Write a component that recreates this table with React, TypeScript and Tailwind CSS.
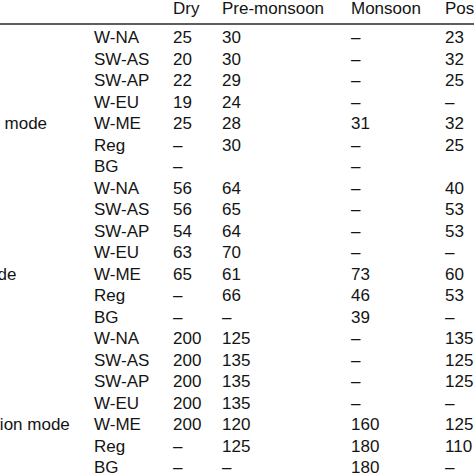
import React from 'react'

type Row = [string, string, string, string, string]

const groups: { label: string; shift: string; rows: Row[] }[] = [
  {
    label: 'Nucleation mode',
    shift: 'ml-[-2.5px]',
    rows: [
      ['W-NA', '25', '30', '–', '23'],
      ['SW-AS', '20', '30', '–', '32'],
      ['SW-AP', '22', '29', '–', '25'],
      ['W-EU', '19', '24', '–', '–'],
      ['W-ME', '25', '28', '31', '32'],
      ['Reg', '–', '30', '–', '25'],
      ['BG', '–', '', '–', ''],
    ],
  },
  {
    label: 'Aitken mode',
    shift: 'ml-0',
    rows: [
      ['W-NA', '56', '64', '–', '40'],
      ['SW-AS', '56', '65', '–', '53'],
      ['SW-AP', '54', '64', '–', '53'],
      ['W-EU', '63', '70', '–', '–'],
      ['W-ME', '65', '61', '73', '60'],
      ['Reg', '–', '66', '46', '53'],
      ['BG', '–', '–', '39', '–'],
    ],
  },
  {
    label: 'Accumulation mode',
    shift: 'ml-[-1.5px]',
    rows: [
      ['W-NA', '200', '125', '–', '135'],
      ['SW-AS', '200', '135', '–', '125'],
      ['SW-AP', '200', '135', '–', '125'],
      ['W-EU', '200', '135', '–', '–'],
      ['W-ME', '200', '120', '160', '125'],
      ['Reg', '–', '125', '180', '110'],
      ['BG', '–', '–', '180', '–'],
    ],
  },
]

const cols = 'grid grid-cols-[172px_79px_49px_129px_94px_200px] h-[21.5px] leading-[21.5px] whitespace-nowrap'

export default function App() {
  return (
    <div
      className="w-[474px] h-[474px] overflow-hidden bg-white text-[17px] text-[#141414]"
      style={{ fontFamily: '"Liberation Sans", Arial, Helvetica, sans-serif' }}
    >
      <div className="ml-[-78px] mt-[-2.5px] w-[760px]">
        {/* Header */}
        <div className={cols}>
          <div />
          <div />
          <div>Dry</div>
          <div>Pre-monsoon</div>
          <div>Monsoon</div>
          <div>Post-monsoon</div>
        </div>
        <div className="mt-[4px] h-[1.5px] bg-[#5e5e5e]" />

        {/* Body */}
        <div className="mt-[2.5px]">
          {groups.map((g) =>
            g.rows.map((r, i) => (
              <div key={g.label + r[0]} className={cols}>
                <div className={g.shift}>{i === 4 ? g.label : ''}</div>
                {r.map((c, j) => (
                  <div key={j}>{c}</div>
                ))}
              </div>
            ))
          )}
        </div>
      </div>
    </div>
  )
}
